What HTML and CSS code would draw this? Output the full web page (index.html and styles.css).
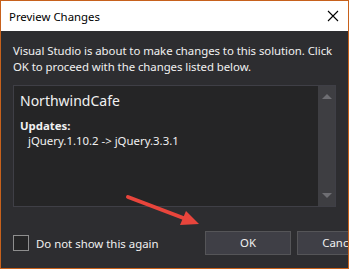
FILE: index.html
```html
<!DOCTYPE html>
<html>
<head>
<meta charset="utf-8">
<link rel="stylesheet" href="styles.css">
</head>
<body>
<div class="window">
  <div class="titlebar">
    <span class="title">Preview Changes</span>
    <svg class="close" width="12" height="12" viewBox="0 0 12 12"><path d="M1 1 L11 11 M11 1 L1 11" stroke="#000" stroke-width="1.1" fill="none"/></svg>
  </div>
  <div class="content">
    <p class="message">Visual Studio is about to make changes to this solution. Click OK to proceed with the changes listed below.</p>
    <div class="panel">
      <div class="panel-body">
        <div class="project">NorthwindCafe</div>
        <div class="section">Updates:</div>
        <div class="item">jQuery.1.10.2 -&gt; jQuery.3.3.1</div>
      </div>
      <div class="scrollbar">
        <span class="arrow-up"></span>
        <span class="arrow-down"></span>
      </div>
    </div>
    <div class="footer">
      <label class="option"><span class="checkbox"></span>Do not show this again</label>
      <button class="btn">OK</button>
      <button class="btn">Cancel</button>
    </div>
  </div>
  <svg class="annotation" width="349" height="269" viewBox="0 0 349 269">
    <line x1="128" y1="197" x2="186" y2="219" stroke="#e8453c" stroke-width="4" stroke-linecap="round"/>
    <polygon points="199,224 180,225 186,211" fill="#e8453c"/>
  </svg>
</div>
</body>
</html>
```

FILE: styles.css
```css
* { box-sizing: border-box; }
html, body { margin: 0; padding: 0; background: #2d2d30; }
.window {
  position: relative;
  width: 349px;
  height: 269px;
  border: 1px solid #c7611c;
  overflow: hidden;
  display: flex;
  flex-direction: column;
  font-family: "Segoe UI", "Noto Sans", sans-serif;
  font-size: 11.4px;
}
.titlebar {
  height: 30px;
  flex-shrink: 0;
  background: #fff;
  display: flex;
  align-items: center;
  justify-content: space-between;
  padding: 0 9px 0 8px;
  color: #000;
  font-size: 11.4px;
}
.close { display: block; margin-top: 0; }
.content {
  flex: 1;
  background: #2d2d30;
  padding: 12px 12px 0 12px;
  color: #f1f1f1;
}
.message {
  margin: 0;
  line-height: 16px;
  font-size: 11.4px;
  letter-spacing: -0.05px;
}
.panel {
  margin-top: 10px;
  width: 323px;
  height: 122px;
  border: 1px solid #3f3f46;
  background: #252526;
  display: flex;
}
.panel-body {
  flex: 1;
  padding: 5px 6px;
}
.project {
  font-size: 14px;
  line-height: 20px;
}
.section {
  margin-top: 8px;
  font-weight: bold;
  line-height: 14px;
}
.item {
  padding-left: 8px;
  line-height: 15px;
}
.scrollbar {
  width: 17px;
  background: #3e3e42;
  display: flex;
  flex-direction: column;
  justify-content: space-between;
  align-items: center;
  padding: 8px 0 8px;
}
.arrow-up {
  width: 0; height: 0;
  border-left: 5px solid transparent;
  border-right: 5px solid transparent;
  border-bottom: 5px solid #6e6e73;
}
.arrow-down {
  width: 0; height: 0;
  border-left: 5px solid transparent;
  border-right: 5px solid transparent;
  border-top: 5px solid #6e6e73;
}
.footer {
  margin-top: 24px;
  display: flex;
  align-items: center;
  gap: 6px;
}
.option {
  width: 186px;
  flex-shrink: 0;
  display: flex;
  align-items: center;
  gap: 7px;
}
.checkbox {
  width: 16px;
  height: 16px;
  border: 1px solid #8e8e8e;
  background: #252526;
}
.btn {
  flex-shrink: 0;
  width: 86px;
  height: 24px;
  background: #3f3f46;
  border: 1px solid #555558;
  color: #f1f1f1;
  font-family: inherit;
  font-size: 11.4px;
  text-align: center;
  padding: 0 0 1px 0;
}
.annotation {
  position: absolute;
  left: -1px;
  top: -1px;
  pointer-events: none;
}
```
